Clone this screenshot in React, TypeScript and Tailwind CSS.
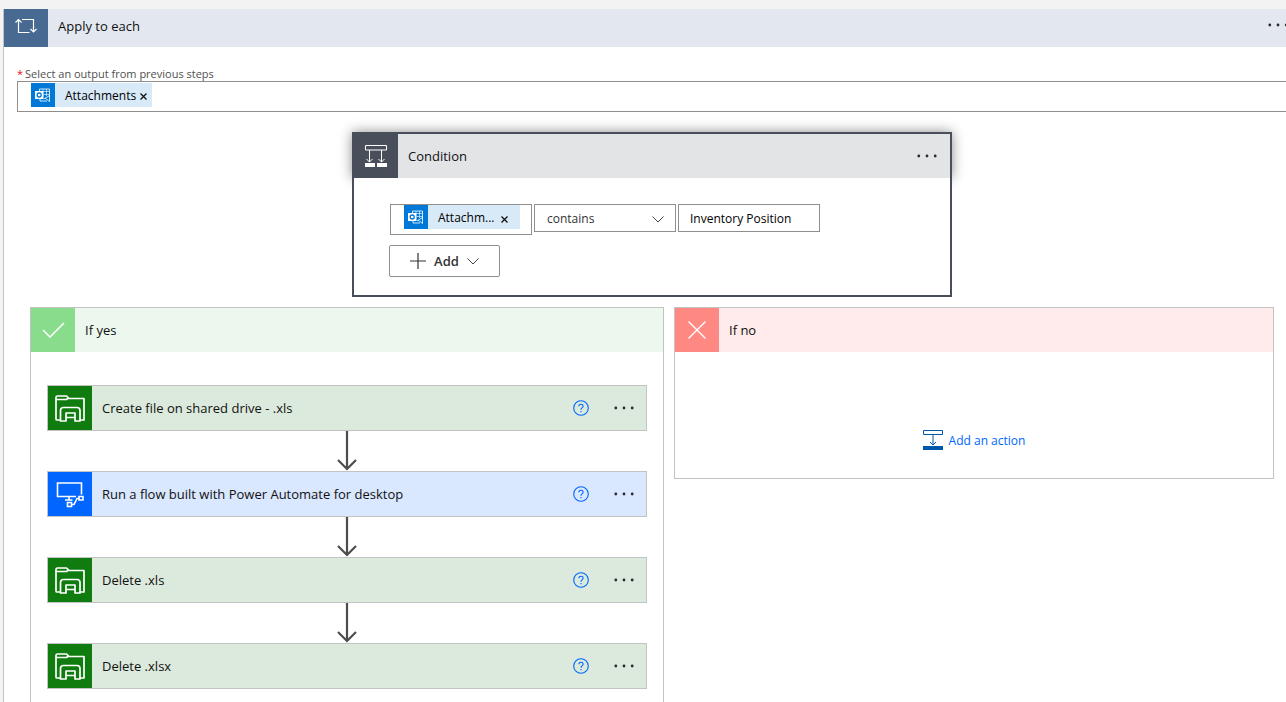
import type { ReactNode } from "react";

const Dots = ({ label }: { label: string }) => {
  return (
    <button type="button" aria-label={label} className="flex h-6 w-6 items-center justify-center">
      <svg width="22" height="4" viewBox="0 0 22 4" fill="#2b2b2b">
        <circle cx="2.8" cy="2" r="1.4" />
        <circle cx="11" cy="2" r="1.4" />
        <circle cx="19.2" cy="2" r="1.4" />
      </svg>
    </button>
  );
};

const LoopIcon = () => {
  return (
    <svg width="22" height="16" viewBox="0 0 22 16" fill="none" stroke="#fff" strokeWidth="1.2">
      <path d="M14.5 14.5H3.5V1.5M0.5 4.5L3.5 1.5L6.5 4.5" />
      <path d="M7 1.5H18.5V14M15.5 11L18.5 14L21.5 11" />
    </svg>
  );
};

const ConditionIcon = () => {
  return (
    <svg width="22" height="22" viewBox="0 0 22 22" fill="none" stroke="#fff">
      <path d="M0.5 0.5H21.5V5H0.5Z" />
      <path d="M4.5 5V17M1.5 14L4.5 17L7.5 14M16.5 5V17M13.5 14L16.5 17L19.5 14" />
      <path d="M0 18H10V22H0ZM12 18H22V22H12Z" fill="#fff" stroke="none" />
    </svg>
  );
};

const CheckIcon = () => {
  return (
    <svg width="24" height="16" viewBox="0 0 24 16" fill="none" stroke="#fff" strokeWidth="1.5">
      <path d="M2 8L9 15L23 1" />
    </svg>
  );
};

const CrossIcon = () => {
  return (
    <svg width="18" height="18" viewBox="0 0 18 18" fill="none" stroke="#fff" strokeWidth="1.4">
      <path d="M0.5 0.5L17.5 17.5M17.5 0.5L0.5 17.5" />
    </svg>
  );
};

const FolderIcon = () => {
  return (
    <svg width="44" height="44" viewBox="0 0 44 44" fill="none" stroke="#fff" strokeWidth="1.7" strokeLinejoin="round">
      <path d="M32 34H36V12.5H21L18.5 10H9.5Q8 10 8 11.5V33Q8 34 9 34H12" />
      <path d="M8 13.5H18.5L21 11.5" />
      <path d="M12.5 34V24.5Q12.5 21.5 15.5 21.5H29Q32 21.5 32 24.5V35H27V27H18V35H12.5V33M18 31.5H27" />
    </svg>
  );
};

const DesktopFlowIcon = () => {
  return (
    <svg width="44" height="44" viewBox="0 0 44 44" fill="none" stroke="#fff" strokeWidth="1.6">
      <path d="M28 24.5H9.5V11H33.5V22.5" />
      <path d="M21 25V28M17 28H24.5" />
      <path d="M19.5 30.5H23.5V34.5H19.5ZM31 24.5H35V28H31Z" />
      <path d="M23.5 32.5H26L29 26.5H31" />
    </svg>
  );
};

const OutlookIcon = () => {
  return (
    <svg width="24" height="24" viewBox="0 0 24 24" className="shrink-0 bg-[#0078d7]" fill="none" stroke="#fff">
      <path d="M8.5 8V6H18.5V14" strokeWidth="0.8" />
      <path d="M12 8.5H18.5M12.5 11.5H18.5M12 6V8M15.5 6V13" strokeWidth="0.6" />
      <path d="M9 16V18H16M18.5 12.5L13 16M14 15L18.5 18.5V12.5" strokeWidth="0.8" />
      <path d="M4 8H12.5V16H4Z" fill="#fff" stroke="none" />
      <circle cx="8.2" cy="12" r="2" stroke="#0078d7" strokeWidth="1.3" />
    </svg>
  );
};

const HelpIcon = () => {
  return (
    <svg width="16" height="16" viewBox="0 0 16 16" fill="none" stroke="#0066ff" strokeWidth="1.1">
      <circle cx="8" cy="8" r="7.3" />
      <path d="M5.9 6.3Q5.9 4.2 8 4.2Q10.1 4.2 10.1 6.1Q10.1 7.2 9 7.9Q8 8.6 8 9.8" />
      <path d="M8 10.9V12.2" />
    </svg>
  );
};

const Chevron = ({ className }: { className?: string }) => {
  return (
    <svg width="12" height="7" viewBox="0 0 12 7" fill="none" stroke="#444" className={className}>
      <path d="M0.5 0.5L6 6L11.5 0.5" />
    </svg>
  );
};

const Token = ({ text, wide }: { text: string; wide?: boolean }) => {
  return (
    <span className="flex h-6 shrink-0 items-center bg-[#d8e9f8] text-xs text-black">
      <OutlookIcon />
      <span className="pt-[2px] pl-[10px]">{text}</span>
      <button type="button" aria-label={`Remove ${text}`} className={wide ? "pt-[5px] pr-3 pl-[7px]" : "pt-[2px] pr-[5px] pl-1"}>
        <svg width="7" height="7" viewBox="0 0 7 7" stroke="#111" strokeWidth="1.3">
          <path d="M0.5 0.5L6.5 6.5M6.5 0.5L0.5 6.5" />
        </svg>
      </button>
    </span>
  );
};

const DownArrow = () => {
  return (
    <svg width="20" height="40" viewBox="0 0 20 40" fill="none" stroke="#4d4d4d" strokeWidth="2.2" className="mx-auto">
      <path d="M10 0V38M1 29L10 38L19 29" />
    </svg>
  );
};

type ActionProps = {
  title: string;
  icon: ReactNode;
  tile: string;
  fill: string;
};

const ActionCard = ({ title, icon, tile, fill }: ActionProps) => {
  return (
    <div className={`flex items-center border border-[#c3c3c3] pr-[10px] ${fill}`}>
      <div className={`h-11 w-11 shrink-0 ${tile}`}>{icon}</div>
      <p className="flex-1 pt-[2px] pl-[10px]">{title}</p>
      <button type="button" aria-label={`Help for ${title}`} className="mr-[23px]">
        <HelpIcon />
      </button>
      <Dots label={`Menu for ${title}`} />
    </div>
  );
};

const ConditionCard = () => {
  return (
    <section className="mx-auto mt-5 w-full max-w-[600px]">
      <div className="flex items-center border-2 border-b-0 border-[#484f5a] bg-[#e3e4e6] pr-[11px] shadow-[0_0_12px_rgba(0,0,0,0.45)]">
        <div className="flex h-11 w-11 shrink-0 items-center justify-center bg-[#484f5a]">
          <ConditionIcon />
        </div>
        <h2 className="flex-1 pt-[2px] pl-[10px]">Condition</h2>
        <Dots label="Condition menu" />
      </div>
      <div className="relative border-2 border-t-0 border-[#484f5a] bg-white pt-[26px] pr-9 pb-[18px] pl-[35px]">
        <div className="flex items-start gap-[2px] pl-px text-xs">
          <div className="flex h-[31px] w-[142px] border border-[#8f8f8f] pl-[13px]">
            <Token text="Attachm..." wide />
          </div>
          <div className="relative w-[142px]">
            <select
              aria-label="Operator"
              defaultValue="contains"
              className="h-7 w-full appearance-none border border-[#8f8f8f] bg-white pt-[2px] pl-3 text-[#333]"
            >
              <option value="contains">contains</option>
            </select>
            <Chevron className="pointer-events-none absolute top-3 right-3" />
          </div>
          <input
            aria-label="Value"
            defaultValue="Inventory Position"
            className="h-7 w-[142px] border border-[#8f8f8f] pl-[11px] text-black"
          />
        </div>
        <button
          type="button"
          className="mt-[10px] flex h-8 w-[111px] items-center justify-center rounded-xs border border-[#8f8f8f] font-semibold text-[#333]"
        >
          <svg width="16" height="16" viewBox="0 0 16 16" stroke="#333" strokeWidth="1.2">
            <path d="M8 0V16M0 8H16" />
          </svg>
          <span className="px-2 pt-[2px]">Add</span>
          <Chevron />
        </button>
      </div>
    </section>
  );
};

const IfYes = () => {
  return (
    <section className="flex-1 border border-[#c3c3c3] pb-10">
      <div className="flex items-center bg-[#ecf7ee]">
        <div className="flex h-11 w-11 items-center justify-center bg-[#8adc8d]">
          <CheckIcon />
        </div>
        <h2 className="pt-[2px] pl-[10px]">If yes</h2>
      </div>
      <div className="px-4 pt-[33px]">
        <ActionCard title="Create file on shared drive - .xls" icon={<FolderIcon />} tile="bg-[#107c10]" fill="bg-[#dbeadc]" />
        <DownArrow />
        <ActionCard
          title="Run a flow built with Power Automate for desktop"
          icon={<DesktopFlowIcon />}
          tile="bg-[#0066ff]"
          fill="bg-[#d9e7ff]"
        />
        <DownArrow />
        <ActionCard title="Delete .xls" icon={<FolderIcon />} tile="bg-[#107c10]" fill="bg-[#dbeadc]" />
        <DownArrow />
        <ActionCard title="Delete .xlsx" icon={<FolderIcon />} tile="bg-[#107c10]" fill="bg-[#dbeadc]" />
      </div>
    </section>
  );
};

const IfNo = () => {
  return (
    <section className="w-[600px] border border-[#c3c3c3]">
      <div className="flex items-center bg-[#ffebeb]">
        <div className="flex h-11 w-11 items-center justify-center bg-[#fd8982]">
          <CrossIcon />
        </div>
        <h2 className="pt-[2px] pl-[10px]">If no</h2>
      </div>
      <div className="flex justify-center pt-[78px] pb-7">
        <button type="button" className="flex items-center gap-[6px] text-xs text-[#0066ff]">
          <svg width="20" height="20" viewBox="0 0 20 20" fill="none" stroke="#0058ad">
            <path d="M0.5 0.5H19.5V4.5H0.5Z" />
            <path d="M10 5V15M7 12L10 15L13 12" />
            <path d="M0 16H20V20H0Z" fill="#0058ad" stroke="none" />
          </svg>
          <span className="pt-[2px]">Add an action</span>
        </button>
      </div>
    </section>
  );
};

const App = () => {
  return (
    <div className="h-screen overflow-hidden bg-[#f3f3f3] pt-[9px] pl-[3px] font-['Open_Sans','Noto_Sans',sans-serif] text-[13px] text-[#111]">
      <main className="-mr-[14px] min-h-full border-l border-[#c3c3c3] bg-white">
        <div className="flex h-[38px] items-center bg-[#e3e8f0] pr-[10px]">
          <div className="flex h-full w-11 items-center justify-center bg-[#486991] pb-1">
            <LoopIcon />
          </div>
          <h1 className="flex-1 pb-[2px] pl-[10px]">Apply to each</h1>
          <div className="pb-[6px]">
            <Dots label="Apply to each menu" />
          </div>
        </div>
        <div className="px-[13px] pt-[19px]">
          <label htmlFor="output" className="flex gap-[2px] text-[11px] leading-[15px] text-[#505050]">
            <span className="text-[#e81123]">*</span>
            Select an output from previous steps
          </label>
          <div className="flex h-[31px] border border-[#8f8f8f] pt-px pl-[13px]">
            <Token text="Attachments" />
            <input id="output" className="min-w-0 flex-1 outline-none" />
          </div>
          <ConditionCard />
          <div className="flex items-start gap-[10px] px-[13px] pt-[10px]">
            <IfYes />
            <IfNo />
          </div>
        </div>
      </main>
    </div>
  );
};

export default App;
